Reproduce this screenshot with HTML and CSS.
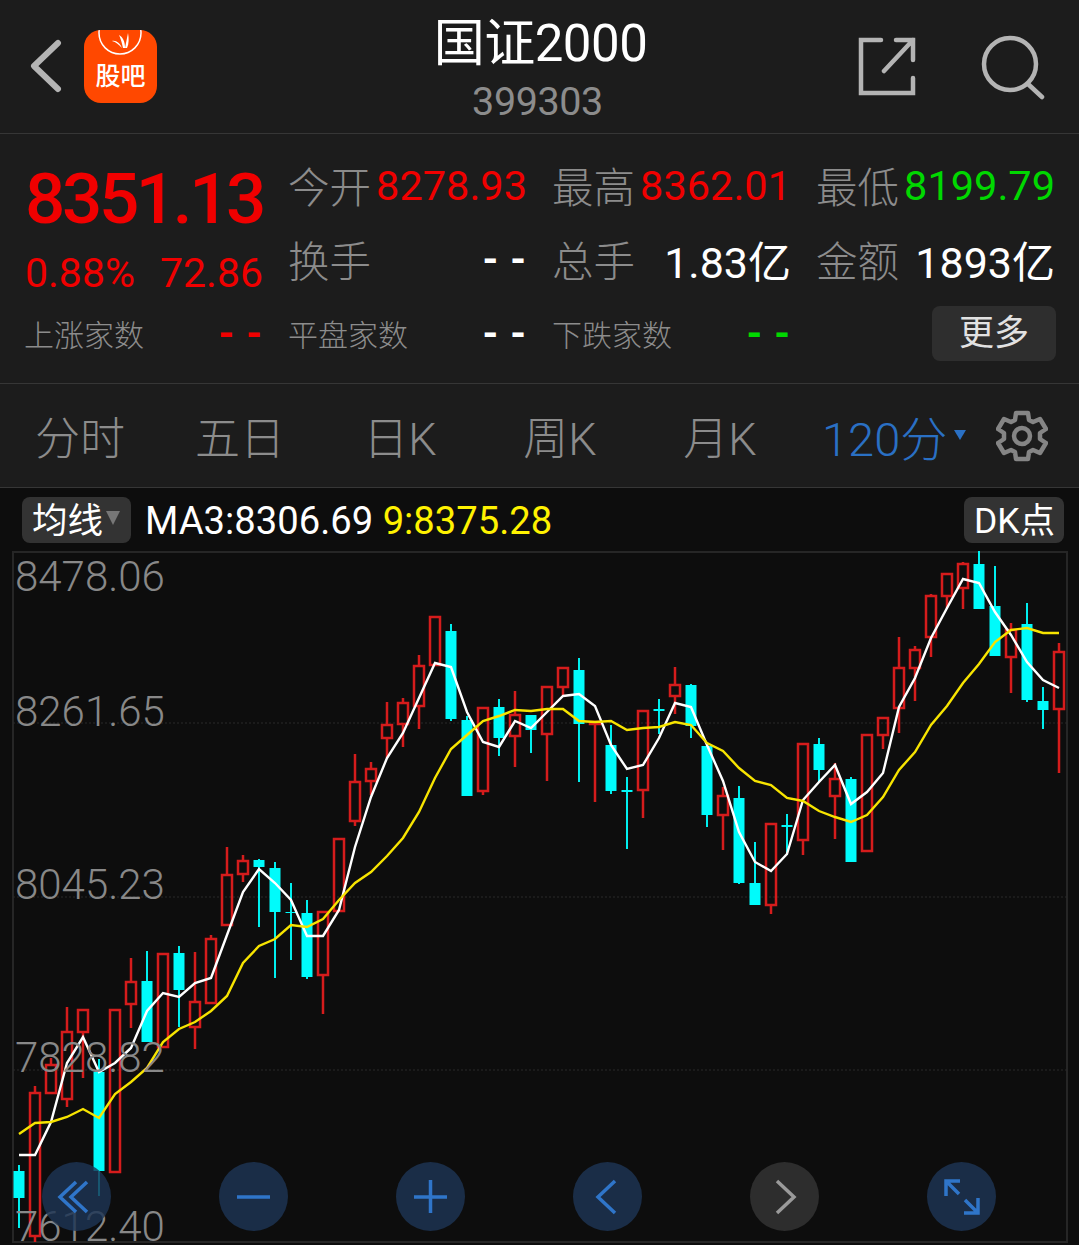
FILE: index.html
```html
<!DOCTYPE html>
<html lang="zh-CN">

<head>
  <meta charset="UTF-8">
  <meta name="viewport" content="width=device-width, initial-scale=1.0">
  <title>国证2000</title>
  <link rel="stylesheet" href="styles.css">
</head>

<body>
  <div class="header">
    <div class="header-left">
      <svg class="back" width="34" height="54" viewBox="0 0 34 54"><path d="M29 4 L5 27 L29 50" /></svg>
      <div class="logo">
        <svg class="logo-mark" width="73" height="30" viewBox="0 0 73 30">
          <circle cx="36" cy="3" r="21" />
          <path class="wing" d="M41 18 C42 13 43 8 44 3 C45 8 45 14 43 18 Z M39 18 C38 14 37 9 35 5 C39 7 41 12 41 18 Z M38 18 C35 15 32 12 28 11 C32 10 36 13 38 18 Z" />
        </svg>
        <div class="logo-text">股吧</div>
      </div>
    </div>
    <div class="title">
      <div class="title-name">国证2000</div>
      <div class="title-code">399303</div>
    </div>
    <div class="header-right">
      <svg width="60" height="60" viewBox="0 0 60 60"><path d="M23 3 H3 V56 H55 V41 M38 3 H55 V23 M55 3 L26 34" /></svg>
      <svg width="64" height="66" viewBox="0 0 64 66"><circle cx="29" cy="30" r="26" /><path d="M47 50 L61 63" /></svg>
    </div>
  </div>

  <div class="quote">
    <div class="price">8351.13</div>
    <div class="cell"><span class="label">今开</span><span class="red">8278.93</span></div>
    <div class="cell"><span class="label">最高</span><span class="red">8362.01</span></div>
    <div class="cell"><span class="label">最低</span><span class="green">8199.79</span></div>

    <div class="cell change"><span class="red">0.88%</span><span class="red">72.86</span></div>
    <div class="cell"><span class="label">换手</span><span class="dash">- -</span></div>
    <div class="cell"><span class="label">总手</span><span class="white amount">1.83亿</span></div>
    <div class="cell"><span class="label">金额</span><span class="white amount">1893亿</span></div>

    <div class="cell small"><span class="label">上涨家数</span><span class="dash red">- -</span></div>
    <div class="cell small"><span class="label">平盘家数</span><span class="dash">- -</span></div>
    <div class="cell small"><span class="label">下跌家数</span><span class="dash green">- -</span></div>
    <div class="cell small more-cell"><div class="more">更多</div></div>
  </div>

  <div class="tabs">
    <div class="tab">分时</div>
    <div class="tab">五日</div>
    <div class="tab">日K</div>
    <div class="tab">周K</div>
    <div class="tab">月K</div>
    <div class="tab active">120分<span class="caret"></span></div>
    <svg class="gear" width="52" height="52" viewBox="0 0 52 52">
      <path d="M20 3 H32 L33 10 L37 12 L44 9 L50 19 L44 23 V29 L50 33 L44 43 L37 40 L33 42 L32 49 H20 L19 42 L15 40 L8 43 L2 33 L8 29 V23 L2 19 L8 9 L15 12 L19 10 Z" />
      <circle cx="26" cy="26" r="8" />
    </svg>
  </div>

  <div class="toolbar">
    <div class="chip">均线<span class="chip-caret"></span></div>
    <div class="ma"><span class="white">MA3:8306.69</span> <span class="yellow">9:8375.28</span></div>
    <div class="chip dk">DK点</div>
  </div>

  <div class="chart">
    <svg id="kline" class="kline" width="1079" height="694" viewBox="0 551 1079 694"></svg>
    <div class="axis top-1">8478.06</div>
    <div class="axis top-2">8261.65</div>
    <div class="axis top-3">8045.23</div>
    <div class="axis top-4">7828.82</div>
    <div class="axis top-5">7612.40</div>
    <div class="controls">
      <div class="ctrl"><svg width="69" height="69" viewBox="0 0 69 69"><path d="M34 20 L18 35 L34 50 M45 20 L29 35 L45 50" /></svg></div>
      <div class="ctrl"><svg width="69" height="69" viewBox="0 0 69 69"><path d="M18 35 H51" /></svg></div>
      <div class="ctrl"><svg width="69" height="69" viewBox="0 0 69 69"><path d="M18 35 H51 M34.500 18 V51" /></svg></div>
      <div class="ctrl"><svg width="69" height="69" viewBox="0 0 69 69"><path d="M42 19 L25 35 L42 51" /></svg></div>
      <div class="ctrl off"><svg width="69" height="69" viewBox="0 0 69 69"><path d="M27 19 L44 35 L27 51" /></svg></div>
      <div class="ctrl"><svg width="69" height="69" viewBox="0 0 69 69"><path d="M19 34 V19 H33 M19 19 L32 32 M51 36 V51 H37 M51 51 L38 38" /></svg></div>
    </div>
  </div>

  <script src="script.js"></script>
</body>

</html>
```

FILE: styles.css
```css
* {
  margin: 0;
  padding: 0;
  box-sizing: border-box;
}

body {
  width: 1079px;
  height: 1245px;
  overflow: hidden;
  background: #0d0d0d;
  font-family: Roboto, "Noto Sans CJK SC", sans-serif;
  font-weight: 300;
  color: #fff;
}

.red { color: #f00000; }
.green { color: #00d800; }
.white { color: #fff; }
.yellow { color: #fff200; }

/* 顶部栏 */
.header {
  height: 134px;
  background: #1c1c1c;
  border-bottom: 1px solid #363636;
  display: flex;
  justify-content: space-between;
  position: relative;
}

.header-left {
  display: flex;
  align-items: center;
  gap: 21px;
  padding: 0 0 0 29px;
  margin-top: -1px;
}

.back path {
  fill: none;
  stroke: #b4b4b4;
  stroke-width: 6;
  stroke-linecap: round;
  stroke-linejoin: round;
}

.logo {
  width: 73px;
  height: 73px;
  border-radius: 17px;
  background: #ff4800;
  overflow: hidden;
  position: relative;
}

.logo-mark {
  display: block;
}

.logo-mark circle {
  fill: none;
  stroke: #fff;
  stroke-width: 1.5;
}

.logo-mark .wing {
  fill: #fff;
}

.logo-text {
  font-size: 25px;
  font-weight: 500;
  text-align: center;
  line-height: 30px;
  margin-top: 2px;
}

.title {
  position: absolute;
  left: 0;
  right: 0;
  top: 15px;
  text-align: center;
  padding-left: 2px;
}

.title-name {
  font-size: 51px;
  line-height: 58px;
  font-weight: 400;
  letter-spacing: -0.5px;
}

.title-code {
  font-size: 39.500px;
  line-height: 58px;
  font-weight: 400;
  color: #8c8c8c;
  letter-spacing: -0.4px;
  margin-right: 6px;
}

.header-right {
  display: flex;
  align-items: center;
  gap: 63px;
  padding-right: 34px;
}

.header-right svg {
  fill: none;
  stroke: #b4b4b4;
  stroke-width: 4.500;
  stroke-linecap: round;
}

/* 行情区 */
.quote {
  height: 250px;
  background: #1c1c1c;
  border-bottom: 1px solid #363636;
  padding: 14px 0 0 25px;
  display: grid;
  grid-template-columns: repeat(4, 238px);
  grid-template-rows: repeat(3, 74px);
  column-gap: 26px;
}

.price {
  font-size: 71px;
  font-weight: 500;
  color: #f00000;
  letter-spacing: -3.4px;
  line-height: 102px;
  height: 74px;
  white-space: nowrap;
}

.cell {
  display: flex;
  justify-content: space-between;
  align-items: center;
  font-size: 41.500px;
  font-weight: 400;
  white-space: nowrap;
}

.label {
  color: #8c8c8c;
  margin-left: -1px;
  font-weight: 300;
}

.amount {
  font-size: 43px;
}

.change {
  font-size: 41px;
  padding-top: 28px;
}

.small {
  font-size: 30px;
}

.dash {
  font-weight: 700;
  letter-spacing: 1px;
  font-size: 40px;
}

.more-cell {
  justify-content: flex-end;
}

.more {
  width: 124px;
  height: 55px;
  margin-right: -1px;
  margin-top: 1px;
  background: #2e2e2e;
  border-radius: 8px;
  color: #e2e2e2;
  font-size: 35px;
  line-height: 55px;
  text-align: center;
}

/* 周期切换 */
.tabs {
  height: 104px;
  background: #1c1c1c;
  border-bottom: 1px solid #363636;
  display: flex;
  align-items: center;
  position: relative;
}

.tab {
  width: 160px;
  text-align: center;
  font-size: 45px;
  color: #8c8c8c;
  white-space: nowrap;
}

.tab.active {
  color: #2a70c4;
  padding-left: 22px;
  font-size: 47px;
}

.caret {
  display: inline-block;
  margin-left: 7px;
  vertical-align: 16px;
  border-left: 6px solid transparent;
  border-right: 6px solid transparent;
  border-top: 10px solid #2a70c4;
}

.gear {
  position: absolute;
  left: 996px;
  top: 26px;
  fill: none;
  stroke: #858585;
  stroke-width: 4.500;
  stroke-linejoin: round;
}

/* 均线栏 */
.toolbar {
  height: 63px;
  background: #0d0d0d;
  display: flex;
  align-items: center;
  padding: 0 15px 0 22px;
  margin-bottom: 0;
}

.chip {
  width: 109px;
  height: 46px;
  background: #333;
  border-radius: 8px;
  font-size: 35.500px;
  line-height: 48px;
  padding-left: 10px;
  font-weight: 400;
  white-space: nowrap;
}

.chip-caret {
  display: inline-block;
  margin-left: 3px;
  vertical-align: 8px;
  border-left: 7px solid transparent;
  border-right: 7px solid transparent;
  border-top: 14px solid #777;
}

.dk {
  width: 100px;
  margin-left: auto;
  padding-left: 10px;
}

.ma {
  font-size: 38.200px;
  font-weight: 400;
  margin-left: 14px;
  padding-top: 2px;
  white-space: nowrap;
}

/* K线图 */
.chart {
  height: 694px;
  position: relative;
  overflow: hidden;
}

.kline {
  position: absolute;
  left: 0;
  top: 0;
}

.frame {
  fill: #0d0d0d;
  stroke: #262626;
  stroke-width: 2;
}

.grid {
  stroke: #2a2a2a;
  stroke-dasharray: 2 2;
}

.up {
  fill: none;
  stroke: #d51c1c;
  stroke-width: 2.500;
}

.down {
  stroke: #00eeee;
  stroke-width: 2;
}

.down-body {
  fill: #00fbfb;
}

.ma-white {
  fill: none;
  stroke: #fff;
  stroke-width: 2.400;
}

.ma-yellow {
  fill: none;
  stroke: #f7e400;
  stroke-width: 2.400;
}

.axis {
  position: absolute;
  left: 15px;
  font-size: 42px;
  line-height: 36px;
  color: #888;
  white-space: nowrap;
}

.top-1 { top: 8px; }
.top-2 { top: 143px; }
.top-3 { top: 316px; }
.top-4 { top: 489px; }
.top-5 { top: 658px; }

.controls {
  position: absolute;
  left: 42px;
  top: 611px;
  display: flex;
  gap: 108px;
}

.ctrl {
  width: 69px;
  height: 69px;
  border-radius: 50%;
  background: rgba(29, 52, 84, 0.82);
}

.ctrl svg {
  display: block;
  fill: none;
  stroke: #2f75c9;
  stroke-width: 3.500;
}

.ctrl.off {
  background: #2d2d2d;
}

.ctrl.off svg {
  stroke: #9a9a9a;
}
```

FILE: script.js
```js
// 每根K线: [涨1/跌0, 实体上沿, 实体下沿, 上影, 下影]，单位是页面y坐标
const candles = [
  [0, 1171, 1198, 1165, 1228], [1, 1093, 1236, 1086, 1242], [1, 1065, 1093, 1058, 1093],
  [1, 1032, 1099, 1007, 1107], [1, 1010, 1032, 1010, 1078], [0, 1072, 1171, 1059, 1196],
  [1, 1010, 1172, 1010, 1172], [1, 982, 1004, 958, 1028], [0, 981, 1042, 951, 1042],
  [1, 954, 1047, 954, 1047], [0, 953, 990, 946, 1027], [1, 1002, 1027, 952, 1049],
  [1, 939, 1003, 935, 1003], [1, 875, 925, 847, 925], [1, 861, 874, 855, 882],
  [0, 860, 867, 859, 927], [0, 868, 912, 862, 978], [0, 912, 913, 883, 960],
  [0, 913, 977, 900, 979], [1, 912, 975, 912, 1014], [1, 839, 911, 839, 911],
  [1, 782, 821, 754, 826], [1, 769, 781, 762, 795], [1, 725, 738, 702, 758],
  [1, 703, 724, 698, 747], [1, 666, 706, 655, 729], [1, 617, 665, 617, 665],
  [0, 631, 719, 624, 721], [0, 720, 796, 716, 796], [1, 708, 791, 708, 795],
  [0, 707, 738, 699, 756], [1, 715, 736, 691, 767], [0, 715, 730, 715, 753],
  [1, 687, 734, 687, 781], [1, 668, 687, 668, 695], [0, 670, 724, 658, 782],
  [1, 722, 724, 722, 802], [0, 745, 791, 725, 794], [0, 790, 792, 777, 849],
  [1, 711, 790, 711, 818], [0, 709, 711, 699, 734], [1, 685, 696, 667, 714],
  [0, 685, 726, 684, 738], [0, 746, 815, 746, 827], [1, 796, 815, 787, 850],
  [0, 798, 883, 786, 884], [0, 883, 905, 842, 905], [1, 824, 905, 823, 914],
  [0, 825, 827, 814, 855], [1, 744, 840, 744, 855], [0, 744, 770, 738, 782],
  [1, 779, 796, 763, 839], [0, 779, 862, 777, 862], [1, 735, 851, 735, 851],
  [1, 718, 735, 718, 749], [1, 668, 708, 637, 733], [1, 650, 668, 646, 701],
  [1, 596, 637, 594, 657], [1, 574, 596, 574, 608], [1, 564, 588, 562, 609],
  [0, 564, 609, 551, 609], [0, 606, 656, 566, 656], [1, 630, 657, 623, 693],
  [0, 624, 700, 603, 702], [0, 701, 710, 687, 729], [1, 652, 709, 643, 773]
];

const ma3 = [1155, 1155, 1122, 1063, 1037, 1072, 1063, 1048, 1011, 993, 997, 983, 978, 935, 892, 869,
  883, 900, 936, 936, 910, 847, 797, 758, 733, 698, 663, 667, 712, 742, 747, 721, 728, 712, 696, 694,
  706, 745, 769, 765, 738, 703, 707, 745, 781, 832, 862, 871, 854, 800, 782, 765, 804, 792, 773, 707,
  678, 638, 608, 579, 583, 612, 635, 662, 680, 688];

const ma9 = [1134, 1123, 1122, 1117, 1109, 1118, 1094, 1082, 1068, 1042, 1029, 1022, 1011, 996, 963,
  946, 939, 925, 927, 919, 900, 883, 872, 856, 838, 812, 778, 749, 735, 721, 716, 710, 711, 709, 709,
  721, 722, 721, 730, 728, 727, 722, 725, 743, 751, 768, 781, 785, 798, 801, 811, 817, 822, 815, 797,
  770, 752, 725, 706, 683, 664, 642, 630, 628, 633, 633];

function xOf(i) {
  return 19 + 16 * i;
}

function drawChart() {
  let html = '<rect class="frame" x="13" y="552" width="1054" height="690" />';

  [723, 897, 1070].forEach(y => {
    html += `<line class="grid" x1="13" x2="1067" y1="${y}" y2="${y}" />`;
  });

  candles.forEach((c, i) => {
    const x = xOf(i);
    const cls = c[0] ? 'up' : 'down';
    html += `<line class="${cls}" x1="${x}" x2="${x}" y1="${c[3]}" y2="${c[1]}" />`;
    html += `<line class="${cls}" x1="${x}" x2="${x}" y1="${c[2]}" y2="${c[4]}" />`;
    if (c[0]) {
      html += `<rect class="up" x="${x - 5}" y="${c[1]}" width="10" height="${c[2] - c[1]}" />`;
    } else {
      html += `<rect class="down-body" x="${x - 5.5}" y="${c[1]}" width="11" height="${c[2] - c[1]}" />`;
    }
  });

  const toPoints = arr => arr.map((y, i) => xOf(i) + ',' + y).join(' ');
  html += `<polyline class="ma-white" points="${toPoints(ma3)}" />`;
  html += `<polyline class="ma-yellow" points="${toPoints(ma9)}" />`;

  document.getElementById('kline').innerHTML = html;
}

drawChart();
```
